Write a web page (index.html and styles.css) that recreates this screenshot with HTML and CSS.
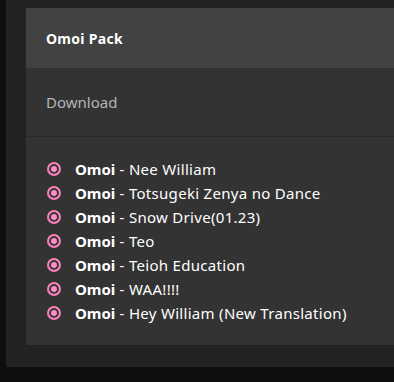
FILE: index.html
```html
<!DOCTYPE html>
<html lang="en">
<head>
    <meta charset="UTF-8">
    <meta name="viewport" content="width=device-width, initial-scale=1.0">
    <title>Omoi Pack</title>
    <link rel="stylesheet" href="styles.css">
</head>
<body>

    <!-- Outer panel -->
    <div class="panel">
        <div class="card">
            <div class="card-header">Omoi Pack</div>
            <div class="card-section">Download</div>

            <!-- Track list -->
            <ul class="tracks">
                <li><span class="radio"></span><b>Omoi</b>&nbsp;- Nee William</li>
                <li><span class="radio"></span><b>Omoi</b>&nbsp;- Totsugeki Zenya no Dance</li>
                <li><span class="radio"></span><b>Omoi</b>&nbsp;- Snow Drive(01.23)</li>
                <li><span class="radio"></span><b>Omoi</b>&nbsp;- Teo</li>
                <li><span class="radio"></span><b>Omoi</b>&nbsp;- Teioh Education</li>
                <li><span class="radio"></span><b>Omoi</b>&nbsp;- WAA!!!!</li>
                <li><span class="radio"></span><b>Omoi</b>&nbsp;- Hey William (New Translation)</li>
            </ul>
        </div>
    </div>

</body>
</html>
```

FILE: styles.css
```css
body {
    font-family: "Noto Sans", sans-serif;
    background-color: #0e0e0e;
    margin: 0;
    padding: 0;
    color: #fff;
}

.panel {
    margin-left: 6px;
    background-color: #232323;
    padding: 8px 0 22px 20px;
}

.card {
    background-color: #333333;
}

.card-header {
    background-color: #424242;
    height: 60px;
    padding-left: 20px;
    display: flex;
    align-items: center;
    font-size: 14px;
    font-weight: bold;
    letter-spacing: 0.3px;
}

.card-section {
    height: 68px;
    padding-left: 20px;
    display: flex;
    align-items: center;
    font-size: 15px;
    color: #b4b4b4;
    border-bottom: 1px solid #2a2a2a;
}

.tracks {
    list-style: none;
    margin: 0;
    padding: 20px 0 20px 21px;
    font-size: 15px;
}

.tracks li {
    height: 24px;
    display: flex;
    align-items: center;
    letter-spacing: 0.3px;
}

.tracks b {
    font-weight: bold;
    letter-spacing: 0;
}

.radio {
    width: 10px;
    height: 10px;
    border: 2px solid #f57fb5;
    border-radius: 50%;
    background: #ff8fc4;
    box-shadow: inset 0 0 0 2px #333;
    margin-right: 14px;
    flex-shrink: 0;
}
```
